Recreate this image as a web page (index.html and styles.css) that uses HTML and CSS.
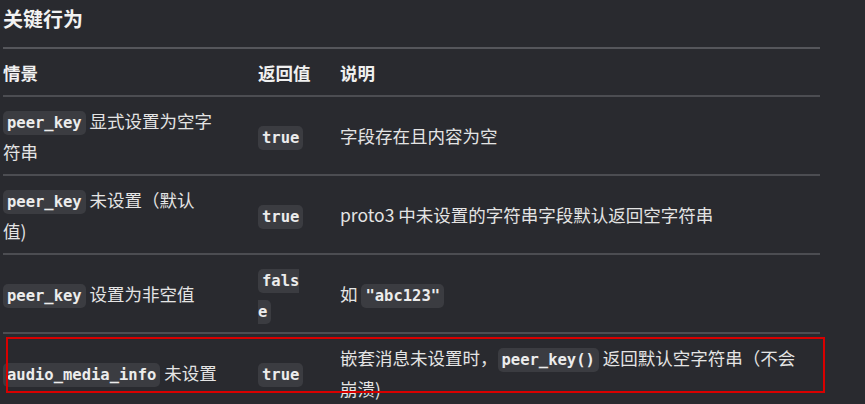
FILE: index.html
```html
<!DOCTYPE html>
<html lang="zh-CN">
<head>
    <meta charset="UTF-8">
    <title>关键行为</title>
    <link rel="stylesheet" href="styles.css">
</head>
<body>
<h3 class="title">关键行为</h3>
<div class="table-wrap">
    <table class="behavior">
        <colgroup>
            <col class="col-case">
            <col class="col-ret">
            <col class="col-desc">
        </colgroup>
        <thead>
        <tr>
            <th>情景</th>
            <th>返回值</th>
            <th>说明</th>
        </tr>
        </thead>
        <tbody>
        <tr>
            <td><code>peer_key</code> 显式设置为空字符串</td>
            <td><code>true</code></td>
            <td>字段存在且内容为空</td>
        </tr>
        <tr>
            <td><code>peer_key</code> 未设置（默认值)</td>
            <td><code>true</code></td>
            <td>proto3 中未设置的字符串字段默认返回空字符串</td>
        </tr>
        <tr>
            <td><code>peer_key</code> 设置为非空值</td>
            <td><code>false</code></td>
            <td>如 <code>"abc123"</code></td>
        </tr>
        <tr>
            <td><code>audio_media_info</code> 未设置</td>
            <td><code>true</code></td>
            <td>嵌套消息未设置时，<code>peer_key()</code> 返回默认空字符串（不会崩溃)</td>
        </tr>
        </tbody>
    </table>
    <div class="mark"></div>
</div>
</body>
</html>
```

FILE: styles.css
```css
body {
    margin: 0;
    padding: 0 3px;
    background-color: #292a2f;
    color: #e4e4e4;
    font-family: "Noto Sans CJK SC", "Noto Sans", sans-serif;
    font-size: 17.5px;
    overflow: hidden;
}
.title {
    margin: 0 0 9px;
    font-size: 20px;
    line-height: 38px;
    font-weight: bold;
    color: #f2f2f2;
}
.table-wrap {
    position: relative;
    width: 817px;
}
.behavior {
    width: 817px;
    table-layout: fixed;
    border-collapse: collapse;
    border-top: 2px solid #55565b;
    overflow-wrap: anywhere;
}
.col-case {
    width: 255px;
}
.col-ret {
    width: 82px;
}
.behavior th,
.behavior td {
    padding: 7.5px 41px 7.5px 0;
    line-height: 31px;
    text-align: left;
    vertical-align: middle;
    border-bottom: 2px solid #4c4d52;
}
.behavior th:nth-child(2),
.behavior td:nth-child(2) {
    padding-right: 28px;
}
.behavior th:last-child,
.behavior td:last-child {
    padding-right: 8px;
}
.behavior th {
    font-weight: bold;
    color: #f0f0f0;
}
.behavior code {
    font-family: "DejaVu Sans Mono", monospace;
    font-weight: bold;
    font-size: 15.5px;
    line-height: 1;
    padding: 3px 4px;
    border-radius: 5px;
    background-color: #3b3c41;
    color: #ececec;
}
.mark {
    position: absolute;
    left: 3px;
    top: 290px;
    width: 815px;
    height: 52px;
    border: 2px solid #d80000;
}
```
